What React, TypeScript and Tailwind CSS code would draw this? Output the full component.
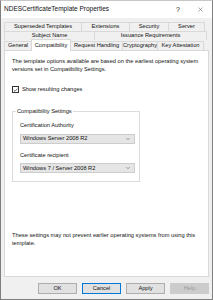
import { ChevronDown, X } from "lucide-react";

const FONT = { fontFamily: '"Liberation Sans", Arial, sans-serif' };

type Tab = { label: string; w: string; active?: boolean };

const ROW1: Tab[] = [
  { label: "Superseded Templates", w: "w-[78px]" },
  { label: "Extensions", w: "w-[49px]" },
  { label: "Security", w: "w-[40px]" },
  { label: "Server", w: "w-[37px]" },
];
const ROW2: Tab[] = [
  { label: "Subject Name", w: "w-[91px]" },
  { label: "Issuance Requirements", w: "w-[113px]" },
];
const ROW3: Tab[] = [
  { label: "General", w: "w-[28px]" },
  { label: "Compatibility", w: "w-[40px]", active: true },
  { label: "Request Handling", w: "w-[53px]" },
  { label: "Cryptography", w: "w-[36px]" },
  { label: "Key Attestation", w: "w-[47px]" },
];

function TabRow({ tabs }: { tabs: Tab[] }) {
  return (
    <div className="flex h-[9px]">
      {tabs.map(t => (
        <div
          key={t.label}
          className={`${t.w} flex items-center justify-center whitespace-nowrap border border-b-0 border-[#d9d9d9] -ml-px first:ml-0 ${t.active ? "bg-white h-[12px] -mt-[2px] relative z-10" : "bg-[#f0f0f0]"}`}
        >
          {t.label}
        </div>
      ))}
    </div>
  );
}

function Select({ value }: { value: string }) {
  return (
    <div className="w-[115px] h-[10px] bg-[#e5e5e5] border border-[#cccccc] flex items-center justify-between pl-[2px] pr-[3px]">
      <span>{value}</span>
      <ChevronDown className="w-[6px] h-[6px] text-[#555]" strokeWidth={2} />
    </div>
  );
}

function Button({ label, primary, disabled }: { label: string; primary?: boolean; disabled?: boolean }) {
  return (
    <div className={`w-[39px] h-[11px] flex items-center justify-center border ${primary ? "bg-[#e1e1e1] border-[#0078d7]" : disabled ? "border-[#cccccc] bg-[#cccccc] text-[#9a9a9a]" : "bg-[#e1e1e1] border-[#adadad]"}`}>
      {label}
    </div>
  );
}

export default function App() {
  return (
    <div style={FONT} className="w-[213px] h-[300px] bg-[#f0f0f0] border border-t-[#c8c8c8] border-[#7f7f7f] flex flex-col text-[5.7px] text-[#111] leading-none overflow-hidden">
      <div className="h-[17px] bg-white flex items-center pl-[3px] shrink-0">
        <span className="text-[6.5px]">NDESCertificateTemplate Properties</span>
        <span className="ml-auto text-[7px] mr-[17px]">?</span>
        <X className="w-[7px] h-[7px] mr-[8px]" strokeWidth={1.2} />
      </div>

      <div className="px-[3px] pt-[4px]">
        <TabRow tabs={ROW1} />
        <TabRow tabs={ROW2} />
        <div className="mt-[1px]">
          <TabRow tabs={ROW3} />
        </div>
      </div>

      <div className="mx-[3px] h-[227px] bg-white border border-[#d9d9d9] px-[7px] pt-[6px] flex flex-col">
        <p className="leading-[8px]">
          The template options available are based on the earliest operating system versions set in Compatibility Settings.
        </p>

        <div className="flex items-center gap-[3px] mt-[13px]">
          <div className="w-[7px] h-[7px] border border-[#333] bg-white flex items-center justify-center">
            <svg viewBox="0 0 10 10" className="w-[6px] h-[6px]">
              <path d="M1.5 5.2 L4 7.6 L8.6 2.4" fill="none" stroke="#222" strokeWidth="1.3" />
            </svg>
          </div>
          <span>Show resulting changes</span>
        </div>

        <div className="relative mt-[18px] w-[128px] h-[71px] border border-[#dcdcdc] pl-[7px] pt-[11px]">
          <span className="absolute -top-[3px] left-[3px] bg-white px-px">Compatibility Settings</span>
          <div>Certification Authority</div>
          <div className="mt-[5px]"><Select value="Windows Server 2008 R2" /></div>
          <div className="mt-[9px]">Certificate recipient</div>
          <div className="mt-[5px]"><Select value="Windows 7 / Server 2008 R2" /></div>
        </div>

        <p className="leading-[8px] mt-[49px]">
          These settings may not prevent earlier operating systems from using this template.
        </p>
      </div>

      <div className="flex justify-end gap-[5px] pr-[3px] mt-[6px]">
        <Button label="OK" />
        <Button label="Cancel" primary />
        <Button label="Apply" />
        <Button label="Help" disabled />
      </div>
    </div>
  );
}
